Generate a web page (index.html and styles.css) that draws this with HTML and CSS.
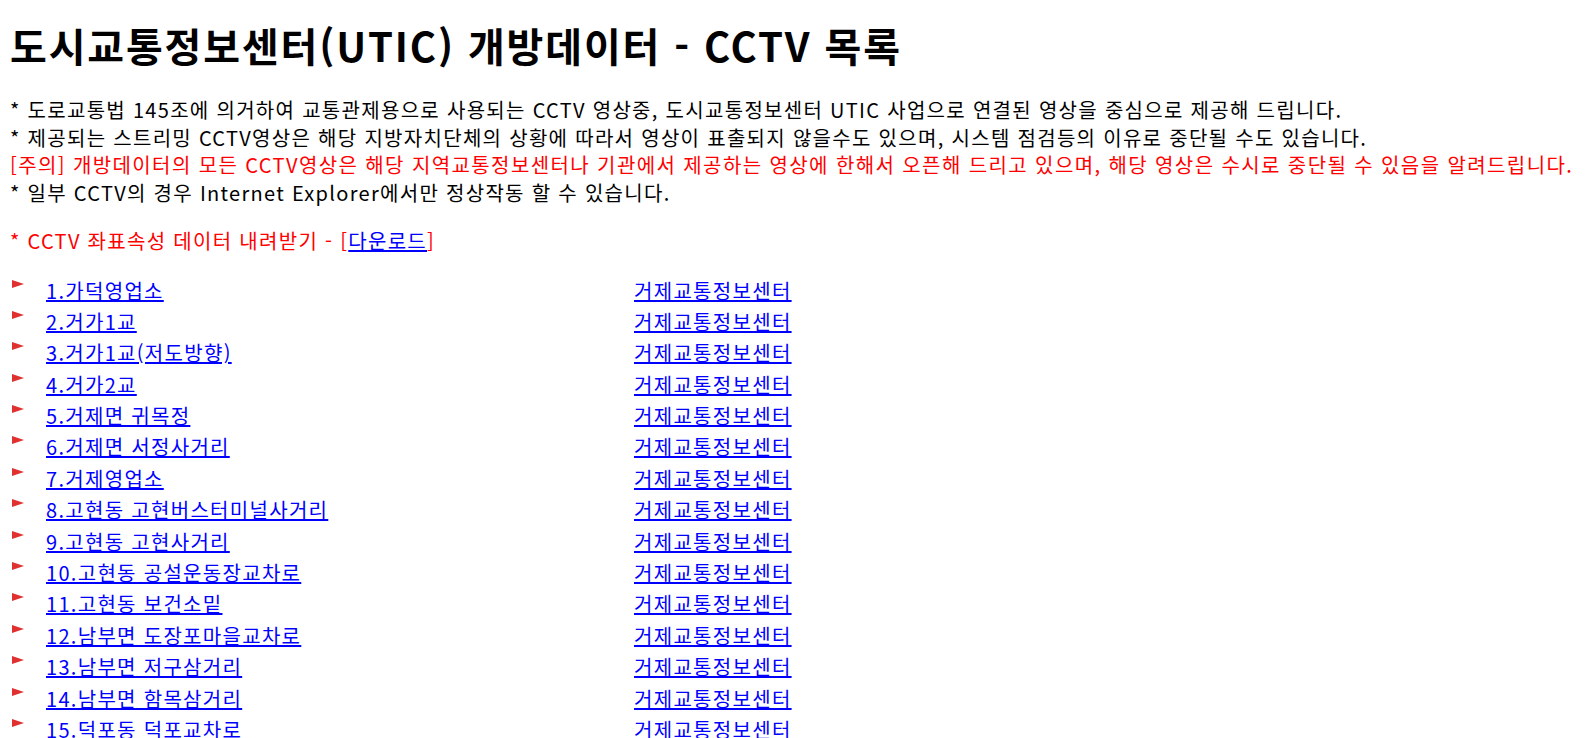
FILE: index.html
```html
<!DOCTYPE html>
<html lang="ko">
<head>
<meta charset="utf-8">
<title>도시교통정보센터(UTIC) 개방데이터 - CCTV 목록</title>
<link rel="stylesheet" href="styles.css">
</head>
<body>
<h1 class="title">도시교통정보센터(UTIC) 개방데이터 - CCTV 목록</h1>
<div class="notice">
  <p>* 도로교통법 145조에 의거하여 교통관제용으로 사용되는 CCTV 영상중, 도시교통정보센터 UTIC 사업으로 연결된 영상을 중심으로 제공해 드립니다.</p>
  <p>* 제공되는 스트리밍 CCTV영상은 해당 지방자치단체의 상황에 따라서 영상이 표출되지 않을수도 있으며, 시스템 점검등의 이유로 중단될 수도 있습니다.</p>
  <p class="warn">[주의] 개방데이터의 모든 CCTV영상은 해당 지역교통정보센터나 기관에서 제공하는 영상에 한해서 오픈해 드리고 있으며, 해당 영상은 수시로 중단될 수 있음을 알려드립니다.</p>
  <p>* 일부 CCTV의 경우 Internet Explorer에서만 정상작동 할 수 있습니다.</p>
</div>
<p class="download">* CCTV 좌표속성 데이터 내려받기 - [<a href="#">다운로드</a>]</p>
<ul class="cctv-list">
  <li><span class="bullet"></span><a class="name" href="#">1.가덕영업소</a><a class="center" href="#">거제교통정보센터</a></li>
  <li><span class="bullet"></span><a class="name" href="#">2.거가1교</a><a class="center" href="#">거제교통정보센터</a></li>
  <li><span class="bullet"></span><a class="name" href="#">3.거가1교(저도방향)</a><a class="center" href="#">거제교통정보센터</a></li>
  <li><span class="bullet"></span><a class="name" href="#">4.거가2교</a><a class="center" href="#">거제교통정보센터</a></li>
  <li><span class="bullet"></span><a class="name" href="#">5.거제면 귀목정</a><a class="center" href="#">거제교통정보센터</a></li>
  <li><span class="bullet"></span><a class="name" href="#">6.거제면 서정사거리</a><a class="center" href="#">거제교통정보센터</a></li>
  <li><span class="bullet"></span><a class="name" href="#">7.거제영업소</a><a class="center" href="#">거제교통정보센터</a></li>
  <li><span class="bullet"></span><a class="name" href="#">8.고현동 고현버스터미널사거리</a><a class="center" href="#">거제교통정보센터</a></li>
  <li><span class="bullet"></span><a class="name" href="#">9.고현동 고현사거리</a><a class="center" href="#">거제교통정보센터</a></li>
  <li><span class="bullet"></span><a class="name" href="#">10.고현동 공설운동장교차로</a><a class="center" href="#">거제교통정보센터</a></li>
  <li><span class="bullet"></span><a class="name" href="#">11.고현동 보건소밑</a><a class="center" href="#">거제교통정보센터</a></li>
  <li><span class="bullet"></span><a class="name" href="#">12.남부면 도장포마을교차로</a><a class="center" href="#">거제교통정보센터</a></li>
  <li><span class="bullet"></span><a class="name" href="#">13.남부면 저구삼거리</a><a class="center" href="#">거제교통정보센터</a></li>
  <li><span class="bullet"></span><a class="name" href="#">14.남부면 함목삼거리</a><a class="center" href="#">거제교통정보센터</a></li>
  <li><span class="bullet"></span><a class="name" href="#">15.덕포동 덕포교차로</a><a class="center" href="#">거제교통정보센터</a></li>
</ul>
</body>
</html>
```
FILE: styles.css
```css
html, body {
  margin: 0;
  padding: 0;
  background: #ffffff;
}
body {
  padding: 0 10px;
  font-family: "Noto Sans CJK KR", "Noto Sans", sans-serif;
  color: #000000;
  font-size: 20px;
  letter-spacing: 1.3px;
}
.title {
  margin: 18px 0 0 0;
  font-size: 40px;
  font-weight: 700;
  line-height: 54px;
  letter-spacing: 1.85px;
}
.notice {
  margin-top: 24px;
}
.notice p {
  margin: 0;
  line-height: 27.7px;
}
.warn {
  color: #ff0000;
  letter-spacing: 1.4px;
}
.download {
  margin: 20px 0 0 0;
  color: #ff0000;
  line-height: 27.7px;
}
a {
  color: #0000ff;
  text-decoration: underline;
}
.cctv-list {
  list-style: none;
  margin: 20px 0 0 0;
  padding: 0;
}
.cctv-list li {
  display: grid;
  grid-template-columns: 36px 588px auto;
  align-items: start;
  height: 31.4px;
  line-height: 31.4px;
}
.bullet {
  display: block;
  width: 0;
  height: 0;
  margin-top: 5px;
  margin-left: 2px;
  border-left: 12px solid #e03030;
  border-top: 4px solid transparent;
  border-bottom: 4px solid transparent;
}
.name, .center {
  justify-self: start;
}
```
